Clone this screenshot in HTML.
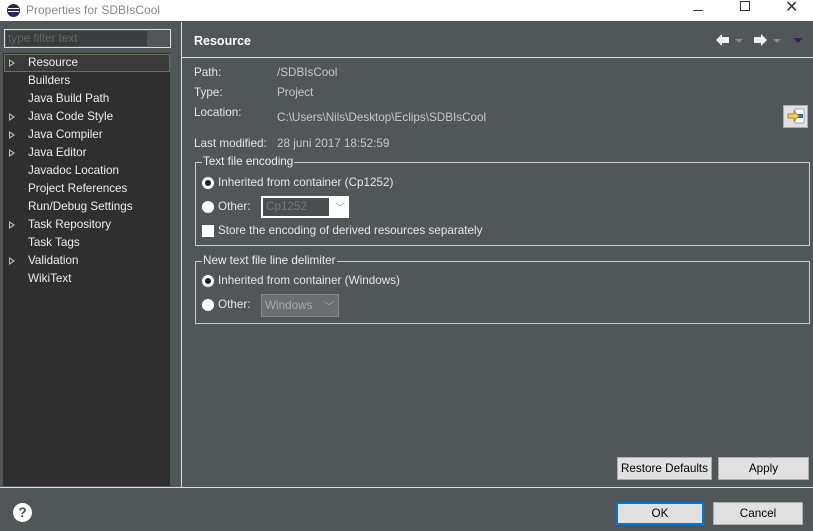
<!DOCTYPE html>
<html><head><meta charset="utf-8"><style>
*{margin:0;padding:0;box-sizing:border-box}
body{width:813px;height:531px;background:#515658;font-family:"Liberation Sans",sans-serif;font-size:11.7px;color:#ddd;position:relative;overflow:hidden}
.a{position:absolute;white-space:nowrap}
.title{left:0;top:0;width:813px;height:21px;background:#fff;color:#888}
.side{left:3px;top:53px;width:167px;height:433px;background:#2f2f2f}
.item{left:28px;color:#eee}
.tri{left:9px;width:0;height:0;border-left:6px solid #bbb;border-top:4px solid transparent;border-bottom:4px solid transparent}
.tri::after{content:"";position:absolute;left:-5px;top:-2px;border-left:3px solid #2f2f2f;border-top:2px solid transparent;border-bottom:2px solid transparent}
.lbl{color:#e6e6e6}
.val{color:#c8c8c8}
.btn{background:#e1e1e1;border:1px solid #adadad;color:#000;text-align:center;line-height:21px}
.radio{width:12px;height:12px;border-radius:50%;background:#fff}
.grp{border:1px solid #ccc}
.leg{background:#515658;padding:0 1px;color:#eee}
</style></head><body>
<div class="a title">
 <div class="a" style="left:7px;top:4px;width:13px;height:13px;border-radius:50%;background:#2c2255"></div>
 <div class="a" style="left:8px;top:8px;width:11px;height:1px;background:#fff"></div>
 <div class="a" style="left:8px;top:11px;width:11px;height:1px;background:#fff"></div>
 <div class="a" style="left:26px;top:3px;font-size:12px">Properties for SDBIsCool</div>
 <div class="a" style="left:693px;top:10px;width:10px;height:1px;background:#333"></div>
 <div class="a" style="left:740px;top:0px;width:10px;height:10px;border:1px solid #333;top:1px"></div>
 <div class="a" style="left:785px;top:-3px;font-size:16px;color:#333">✕</div>
</div>
<div class="a" style="left:4px;top:29px;width:167px;height:19px;border:1px solid #ddd;background:#515658"></div>
<div class="a" style="left:6px;top:31px;width:141px;height:15px;background:#3b3d3e;color:#666;padding-left:2px;line-height:15px">type filter text</div>
<div class="a side"></div>
<div class="a" style="left:4px;top:54px;width:166px;height:18px;border:1px solid #6e6e5e;background:#3a3a38"></div>
<div class="a" style="left:181px;top:22px;width:1px;height:466px;background:#ddd"></div>
<div class="a" style="left:182px;top:57px;width:631px;height:1px;background:#ddd"></div>
<div class="a" style="left:0;top:487px;width:813px;height:1px;background:#ddd"></div>
<div class="a tri" style="top:59px"></div>
<div class="a tri" style="top:113px"></div>
<div class="a tri" style="top:131px"></div>
<div class="a tri" style="top:149px"></div>
<div class="a tri" style="top:221px"></div>
<div class="a tri" style="top:257px"></div>
<div class="a item" style="top:56px">Resource</div>
<div class="a item" style="top:74px">Builders</div>
<div class="a item" style="top:92px">Java Build Path</div>
<div class="a item" style="top:110px">Java Code Style</div>
<div class="a item" style="top:128px">Java Compiler</div>
<div class="a item" style="top:146px">Java Editor</div>
<div class="a item" style="top:164px">Javadoc Location</div>
<div class="a item" style="top:182px">Project References</div>
<div class="a item" style="top:200px">Run/Debug Settings</div>
<div class="a item" style="top:218px">Task Repository</div>
<div class="a item" style="top:236px">Task Tags</div>
<div class="a item" style="top:254px">Validation</div>
<div class="a item" style="top:272px">WikiText</div>

<div class="a" style="left:194px;top:34px;font-weight:bold;color:#fff;font-size:12.5px">Resource</div>
<svg class="a" style="left:714px;top:32px" width="92" height="16">
 <path d="M2 8 L8 2 L8 5 L15 5 L15 11 L8 11 L8 14 Z" fill="#f2f2f2"/>
 <path d="M21 7 L29 7 L25 11 Z" fill="#888"/>
 <path d="M53 8 L47 2 L47 5 L40 5 L40 11 L47 11 L47 14 Z" fill="#f2f2f2"/>
 <path d="M59 7 L67 7 L63 11 Z" fill="#888"/>
 <path d="M79 6 L89 6 L84 11 Z" fill="#3a2060"/>
</svg>

<div class="a lbl" style="left:194px;top:66px">Path:</div><div class="a val" style="left:277px;top:66px">/SDBIsCool</div>
<div class="a lbl" style="left:194px;top:86px">Type:</div><div class="a val" style="left:277px;top:86px">Project</div>
<div class="a lbl" style="left:194px;top:106px">Location:</div><div class="a val" style="left:277px;top:111px">C:\Users\Nils\Desktop\Eclips\SDBIsCool</div>
<div class="a" style="left:783px;top:105px;width:25px;height:23px;background:#e1e1e1;border:1px solid #aaa"></div>
<svg class="a" style="left:787px;top:108px" width="18" height="17">
 <rect x="8" y="1" width="9" height="14" fill="#fff" stroke="#9ab"/>
 <rect x="11" y="6" width="5" height="4" fill="#2a6bbf"/>
 <path d="M1 6 L7 6 L7 3 L12 8 L7 13 L7 10 L1 10 Z" fill="#f5d060" stroke="#b88010"/>
</svg>
<div class="a lbl" style="left:194px;top:137px">Last modified:</div><div class="a val" style="left:277px;top:137px">28 juni 2017 18:52:59</div>

<div class="a grp" style="left:195px;top:162px;width:615px;height:84px"></div>
<div class="a leg" style="left:202px;top:155px">Text file encoding</div>
<div class="a" style="left:202px;top:177px;width:12px;height:12px;border-radius:50%;border:3px solid #fff;background:#222"></div>
<div class="a lbl" style="left:218px;top:176px">Inherited from container (Cp1252)</div>
<div class="a radio" style="left:202px;top:201px"></div>
<div class="a lbl" style="left:218px;top:200px">Other:</div>
<div class="a" style="left:261px;top:196px;width:88px;height:22px;background:#fff"></div>
<div class="a" style="left:263px;top:198px;width:66px;height:18px;background:#4a4e50;color:#777;padding-left:3px;line-height:18px">Cp1252</div>
<div class="a" style="left:335px;top:199px;color:#999;font-size:10px">﹀</div>
<div class="a" style="left:202px;top:225px;width:12px;height:12px;background:#fff"></div>
<div class="a lbl" style="left:218px;top:224px">Store the encoding of derived resources separately</div>

<div class="a grp" style="left:195px;top:261px;width:615px;height:63px"></div>
<div class="a leg" style="left:202px;top:254px">New text file line delimiter</div>
<div class="a" style="left:202px;top:275px;width:12px;height:12px;border-radius:50%;border:3px solid #fff;background:#222"></div>
<div class="a lbl" style="left:218px;top:274px">Inherited from container (Windows)</div>
<div class="a radio" style="left:202px;top:299px"></div>
<div class="a lbl" style="left:218px;top:298px">Other:</div>
<div class="a" style="left:261px;top:294px;width:78px;height:23px;background:#6a6e70;border:1px solid #888"></div>
<div class="a" style="left:265px;top:299px;color:#aaa">Windows</div>
<div class="a" style="left:324px;top:298px;color:#aaa;font-size:10px">﹀</div>

<div class="a btn" style="left:617px;top:457px;width:95px;height:23px">Restore Defaults</div>
<div class="a btn" style="left:718px;top:457px;width:91px;height:23px">Apply</div>
<div class="a btn" style="left:616px;top:502px;width:88px;height:23px;border:2px solid #0078d7;line-height:19px">OK</div>
<div class="a btn" style="left:713px;top:502px;width:90px;height:23px">Cancel</div>
<div class="a" style="left:13px;top:503px;width:19px;height:19px;border-radius:50%;background:#fff;color:#515658;font-weight:bold;text-align:center;line-height:19px;font-size:14px">?</div>
</body></html>
